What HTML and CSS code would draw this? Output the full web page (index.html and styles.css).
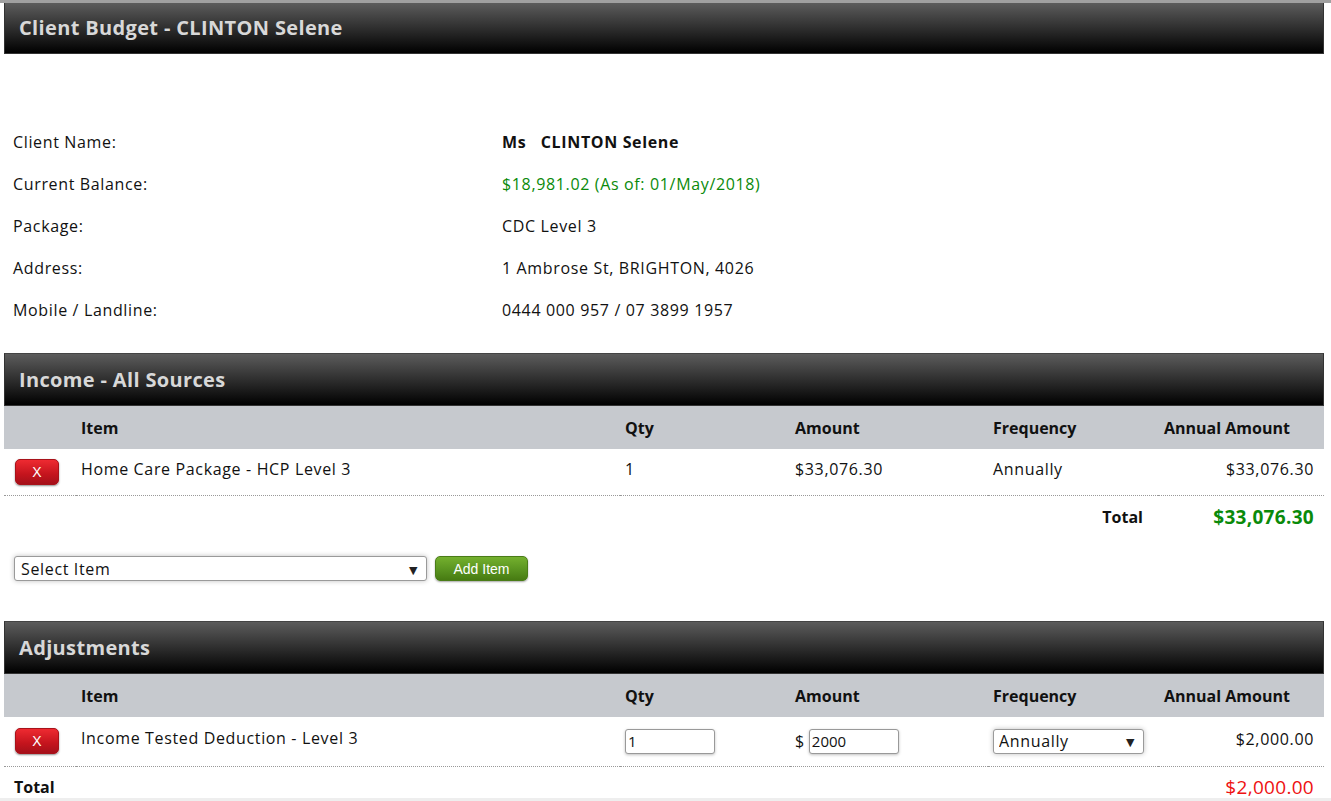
FILE: index.html
```html
<!DOCTYPE html>
<html>
<head>
<meta charset="utf-8">
<title>Client Budget</title>
<link rel="stylesheet" href="styles.css">
</head>
<body>
<div class="topstrip"></div>
<div class="page">
  <div class="bar first">Client Budget - CLINTON Selene</div>

  <div class="info">
    <div class="info-row"><div class="label">Client Name:</div><div class="value strong">Ms&nbsp;&nbsp; CLINTON Selene</div></div>
    <div class="info-row"><div class="label">Current Balance:</div><div class="value green">$18,981.02 (As of: 01/May/2018)</div></div>
    <div class="info-row"><div class="label">Package:</div><div class="value">CDC Level 3</div></div>
    <div class="info-row"><div class="label">Address:</div><div class="value">1 Ambrose St, BRIGHTON, 4026</div></div>
    <div class="info-row"><div class="label">Mobile / Landline:</div><div class="value">0444 000 957 / 07 3899 1957</div></div>
  </div>

  <div class="bar">Income - All Sources</div>
  <table class="grid">
    <colgroup><col class="c-btn"><col class="c-item"><col class="c-qty"><col class="c-amt"><col class="c-freq"><col class="c-ann"></colgroup>
    <thead>
      <tr><th></th><th>Item</th><th>Qty</th><th>Amount</th><th>Frequency</th><th class="ann-h">Annual Amount</th></tr>
    </thead>
    <tbody>
      <tr class="data inc"><td class="btn-cell"><button class="del">X</button></td><td>Home Care Package - HCP Level 3</td><td>1</td><td>$33,076.30</td><td>Annually</td><td class="num">$33,076.30</td></tr>
      <tr class="total"><td></td><td></td><td></td><td></td><td class="total-label">Total</td><td class="num total-green">$33,076.30</td></tr>
    </tbody>
  </table>

  <div class="add-row">
    <div class="select-wrap"><select class="sel wide"><option>Select Item</option></select></div>
    <button class="add">Add Item</button>
  </div>

  <div class="bar">Adjustments</div>
  <table class="grid">
    <colgroup><col class="c-btn"><col class="c-item"><col class="c-qty"><col class="c-amt"><col class="c-freq"><col class="c-ann"></colgroup>
    <thead>
      <tr><th></th><th>Item</th><th>Qty</th><th>Amount</th><th>Frequency</th><th class="ann-h">Annual Amount</th></tr>
    </thead>
    <tbody>
      <tr class="data adj"><td class="btn-cell"><button class="del">X</button></td><td class="top">Income Tested Deduction - Level 3</td><td><input class="inp" value="1"></td><td><span class="dollar">$</span><input class="inp" value="2000"></td><td><div class="select-wrap"><select class="sel freq"><option>Annually</option></select></div></td><td class="num top">$2,000.00</td></tr>
    </tbody>
  </table>
  <div class="adj-total"><span class="total-label2">Total</span><span class="total-red">$2,000.00</span></div>
</div>
<div class="bottomstrip"></div>
</body>
</html>
```

FILE: styles.css
```css
html, body {
  margin: 0;
  padding: 0;
  background: #fff;
}
body {
  font-family: "Open Sans", "DejaVu Sans", sans-serif;
  font-size: 16px;
  letter-spacing: 0.65px;
  color: #111;
}
.topstrip {
  height: 3px;
  background: #a0a0a0;
}
.page {
  padding: 0 7px 0 4px;
}
.bar {
  height: 53px;
  box-sizing: border-box;
  border: 1px solid #333;
  border-top-color: #444;
  background: linear-gradient(#5c5c5c, #2a2a2a 55%, #000);
  color: #d8d8d8;
  font-weight: bold;
  font-size: 20px;
  letter-spacing: 0.35px;
  line-height: 51px;
  padding-left: 14px;
}
.bar.first {
  height: 51px;
  border-top: none;
  line-height: 50px;
}
.info {
  padding: 67px 0 22px 9px;
}
.info-row {
  display: flex;
  height: 42px;
  align-items: center;
}
.label {
  width: 489px;
}
.value.strong {
  font-weight: bold;
}
.green {
  color: #0a8a0a;
}
.grid {
  width: 1320px;
  border-collapse: collapse;
  table-layout: fixed;
}
.c-btn { width: 72px; }
.c-item { width: 544px; }
.c-qty { width: 170px; }
.c-amt { width: 198px; }
.c-freq { width: 170px; }
.c-ann { width: 166px; }
.grid thead tr {
  background: #c6c9ce;
  height: 43px;
}
.grid th {
  text-align: left;
  font-weight: bold;
  padding: 0 0 0 5px;
  font-size: 16px;
  letter-spacing: 0;
}
.grid th.ann-h {
  padding-left: 6px;
}
.grid td {
  padding: 0 0 0 5px;
}
.grid tr.data {
  height: 46px;
  border-bottom: 1px dotted #999;
}
.grid tr.inc td {
  padding-bottom: 5px;
}
.grid tr.inc td.btn-cell {
  padding-bottom: 0;
}
.grid tr.data.adj {
  height: 49px;
}
.grid td.btn-cell {
  padding-left: 11px;
}
.grid td.num {
  text-align: right;
  padding-right: 10px;
}
.grid td.top {
  vertical-align: top;
  padding-top: 10px;
}
.grid tr.adj td.num.top {
  padding-top: 11px;
}
.del {
  width: 44px;
  height: 26px;
  border: 1px solid #a8121a;
  border-radius: 5px;
  background: linear-gradient(#ee2a31, #c4141d 60%, #a5101a);
  color: #fff;
  font-family: "Liberation Sans", Arial, sans-serif;
  font-size: 14px;
  letter-spacing: 0;
  padding: 0;
  box-shadow: 0 1px 2px rgba(0,0,0,0.45);
  display: block;
}
.grid tr.total {
  height: 44px;
}
.total-label {
  text-align: right;
  padding-right: 15px !important;
  font-weight: bold;
  letter-spacing: 0;
}
.total-green {
  color: #0a8a0a;
  font-weight: bold;
  font-size: 19px;
  letter-spacing: 0.3px;
}
.add-row {
  display: flex;
  align-items: center;
  gap: 8px;
  padding: 17px 0 40px 10px;
}
.select-wrap {
  position: relative;
  display: inline-block;
  vertical-align: middle;
}
.select-wrap::after {
  content: "\25BC";
  position: absolute;
  right: 9px;
  top: 50%;
  transform: translateY(-50%);
  font-size: 11px;
  color: #222;
  pointer-events: none;
}
.sel {
  -webkit-appearance: none;
  appearance: none;
  box-sizing: border-box;
  height: 25px;
  border: 1px solid #9a9a9a;
  border-radius: 3px;
  background: #fff;
  font-family: "Open Sans", "DejaVu Sans", sans-serif;
  font-size: 16px;
  letter-spacing: 0.65px;
  color: #111;
  padding: 0 6px;
  box-shadow: 0 0 5px rgba(0,0,0,0.25);
  display: block;
}
.sel.wide {
  width: 413px;
}
.sel.freq {
  width: 151px;
  padding-left: 5px;
}
.add {
  width: 93px;
  height: 25px;
  border: 1px solid #4a7c18;
  border-radius: 5px;
  background: linear-gradient(#74b02e, #5a9420 55%, #477b12);
  color: #fff;
  font-family: "Liberation Sans", Arial, sans-serif;
  font-size: 14px;
  letter-spacing: 0;
  padding: 0;
  box-shadow: 0 1px 2px rgba(0,0,0,0.35);
}
.inp {
  box-sizing: border-box;
  width: 90px;
  height: 25px;
  border: 1px solid #999;
  border-radius: 3px;
  font-family: "Open Sans", "DejaVu Sans", sans-serif;
  font-size: 15px;
  padding: 0 2px;
  color: #111;
  box-shadow: 0 1px 3px rgba(0,0,0,0.25);
  vertical-align: middle;
}
.dollar {
  margin-right: 4px;
  vertical-align: middle;
}
.adj-total {
  box-sizing: border-box;
  display: flex;
  justify-content: space-between;
  align-items: center;
  height: 31px;
  padding: 10px 10px 0;
}
.total-label2 {
  font-weight: bold;
  letter-spacing: 0;
}
.total-red {
  color: #ee1111;
  font-size: 19px;
  letter-spacing: 0.3px;
}
.bottomstrip {
  height: 3px;
  background: #eeeeee;
}
```
